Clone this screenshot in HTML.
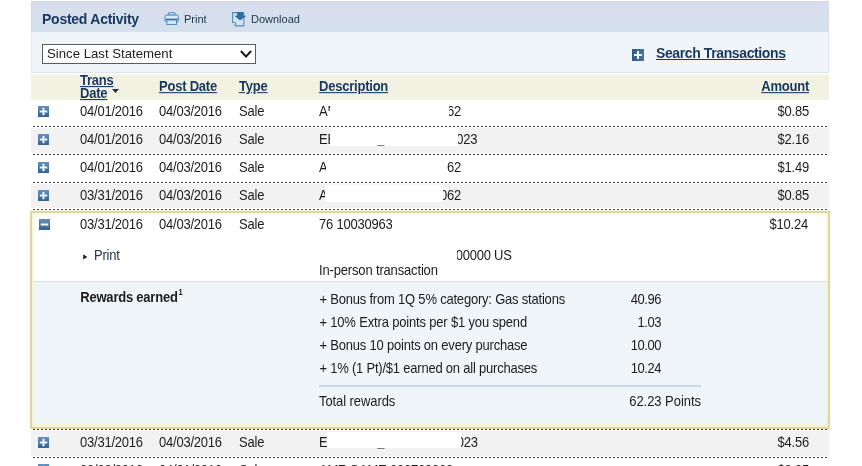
<!DOCTYPE html>
<html lang="en">
<head>
<meta charset="utf-8">
<title>Posted Activity</title>
<style>
html,body{margin:0;padding:0;background:#fff;}
body{width:862px;height:466px;overflow:hidden;position:relative;font-family:"Liberation Sans",Arial,sans-serif;font-size:13px;color:#1c1c1c;letter-spacing:-0.22px;}
.abs{position:absolute;white-space:nowrap;}
#panel{position:absolute;left:31px;top:1px;width:798px;height:465px;will-change:transform;}
#hdr{position:absolute;left:0;top:0;width:798px;height:31px;background:linear-gradient(#d9deee,#d4e0ec);box-sizing:border-box;border-top:1px solid #d0d8e4;border-left:1px solid #d0d8e4;}
#flt{position:absolute;left:0;top:31px;width:798px;height:41px;background:#f0f5fa;box-sizing:border-box;border-left:1px solid #dde4ee;border-right:1px solid #dde4ee;border-bottom:1px solid #dfe5ee;}
#thead{position:absolute;left:0;top:73px;width:798px;height:26px;background:linear-gradient(#f8f8ef 0,#f8f8ef 1px,#f2f2e2 1px);}
.navy{color:#17375e;}
.b{font-weight:bold;}
.u{text-decoration:underline;}
.row{position:absolute;left:0;width:798px;height:27px;}
.row.g{background:linear-gradient(#f2f2f2,#f2f2f2) no-repeat 0 1px / 100% 25px;}
.dot{position:absolute;left:0;width:798px;height:1px;background:repeating-linear-gradient(90deg,transparent 0,transparent 2px,#3a3a3a 2px,#3a3a3a 4px);}
.row span,.row i{position:absolute;white-space:nowrap;top:5px;line-height:15px;font-style:normal;}
.c1{left:49px;}
.c2{left:128px;}
.c3{left:208px;}
.c4{left:288px;}
.c5{right:20px;}
.ico{position:absolute;left:7px;top:7px;width:11px;height:11px;}
.mask{position:absolute;background:#fff;}
#exp{position:absolute;left:-1px;top:210px;width:800px;height:218px;box-sizing:border-box;border:2px solid #dcd7a6;background:#fff;box-shadow:0 0 2px 0 #f3f0cf;}
#glow{position:absolute;left:0;top:0;width:796px;height:214px;box-shadow:inset 0 0 3px 1px #f3f0c6;pointer-events:none;}
#rew{position:absolute;left:0px;top:68px;width:796px;height:142px;background:#f0f5fa;border-top:1px solid #d9dde2;border-bottom:3px solid #fbf9e3;}
#rew span{position:absolute;white-space:nowrap;line-height:15px;}
.row span,.row i,#exp>span.abs,#rew>span{transform:scaleY(1.09);transform-origin:0 12px;}
#thead span{transform:scaleY(1.06);transform-origin:0 11px;}
</style>
</head>
<body>
<svg width="0" height="0" style="position:absolute"><defs><linearGradient id="gi" x1="0" y1="0" x2="0" y2="1"><stop offset="0" stop-color="#6690bd"/><stop offset="1" stop-color="#36618f"/></linearGradient></defs></svg>
<div id="panel">
  <div id="hdr">
    <span class="abs b navy" style="left:10px;top:9px;font-size:14px;line-height:16px;letter-spacing:-0.25px;">Posted Activity</span>
    <svg class="abs" style="left:132px;top:10px" width="16" height="14" viewBox="0 0 16 14">
      <path d="M4 3.2 L4.7 0.7 H10.7 L11.4 3.2 Z" fill="#cfe4f5" stroke="#4f8abb" stroke-width="1"/>
      <rect x="1" y="3.1" width="13.4" height="7" rx="1.6" fill="#dbe9f5" stroke="#4f8abb" stroke-width="1"/>
      <rect x="1.6" y="6.7" width="12.2" height="1.4" fill="#2a5a8c"/>
      <rect x="2.9" y="8" width="9.6" height="4.5" fill="#d2e6f6" stroke="#4f8abb" stroke-width="1"/>
    </svg>
    <span class="abs navy" style="left:152px;top:11px;font-size:11px;line-height:13px;letter-spacing:0;color:#22354f;">Print</span>
    <svg class="abs" style="left:200px;top:10px" width="16" height="15" viewBox="0 0 16 15">
      <path d="M0.6 0.6 H11.8 V13.9 H3.6 L0.6 10.4 Z" fill="#d0e5f6" stroke="#4f8abb" stroke-width="1.1"/>
      <path d="M0.6 10.4 H3.6 V13.9" fill="#f4f9fd" stroke="#4f8abb" stroke-width="1"/>
      <path d="M5 0 H11.2 V3.7 H14.6 L8 8.4 L2.3 3.7 H5 Z" fill="#2f6fa6"/>
    </svg>
    <span class="abs navy" style="left:219px;top:11px;font-size:11px;line-height:13px;letter-spacing:0;color:#22354f;">Download</span>
  </div>
  <div id="flt">
    <div class="abs" style="left:10px;top:12px;width:214px;height:20px;box-sizing:border-box;border:1px solid #5c5c5c;background:#fff;">
      <span class="abs" style="left:4px;top:1px;font-size:13.2px;line-height:16px;letter-spacing:0;color:#222;">Since Last Statement</span>
      <svg class="abs" style="left:197.4px;top:4.5px" width="12" height="9" viewBox="0 0 12 9"><path d="M0.9 1 L6 6.6 L11.1 1" fill="none" stroke="#151515" stroke-width="2"/></svg>
    </div>
    <svg class="abs" style="left:600px;top:17px" width="12" height="12" viewBox="0 0 12 12">
      <defs><linearGradient id="gs" x1="0" y1="0" x2="1" y2="0"><stop offset="0" stop-color="#34588a"/><stop offset="1" stop-color="#4d7199"/></linearGradient></defs>
      <rect width="12" height="12" fill="url(#gs)"/>
      <path d="M6 2 V10 M2 6 H10" stroke="#ecffff" stroke-width="2"/>
    </svg>
    <span class="abs b navy u" style="left:624px;top:13px;font-size:14px;line-height:16px;letter-spacing:-0.39px;">Search Transactions</span>
  </div>
  <div id="thead">
    <span class="abs b navy u" style="left:49px;top:0px;line-height:13px;">Trans</span>
    <span class="abs b navy u" style="left:49px;top:12.6px;line-height:13px;">Date</span>
    <svg class="abs" style="left:81px;top:15px" width="7" height="4" viewBox="0 0 7 4"><path d="M0 0 H7 L3.5 4 Z" fill="#1f2f4a"/></svg>
    <span class="abs b navy u" style="left:128px;top:5px;line-height:15px;">Post Date</span>
    <span class="abs b navy u" style="left:208px;top:5px;line-height:15px;">Type</span>
    <span class="abs b navy u" style="left:288px;top:5px;line-height:15px;">Description</span>
    <span class="abs b navy u" style="right:20px;top:5px;line-height:15px;">Amount</span>
  </div>
  <div class="row" style="top:98px;"><svg class="ico" viewBox="0 0 11 11"><rect width="11" height="11" fill="url(#gi)"/><path d="M5.5 1.5 V9.5 M1.5 5.5 H9.5" stroke="#a9cdee" stroke-width="3.2" opacity="0.4"/><path d="M5.5 1.9 V9.1 M1.9 5.5 H9.1" stroke="#fff" stroke-width="1.6"/></svg><span class="c1">04/01/2016</span><span class="c2">04/03/2016</span><span class="c3">Sale</span><span class="c4">AM</span><span style="right:368px;">62</span><div class="mask" style="left:298.9px;top:1px;width:119.1px;height:26px;"></div><div class="mask" style="left:296.7px;top:12.3px;width:2.8px;height:14.7px;"></div><span class="c5">$0.85</span></div>
  <div class="dot" style="top:125px;"></div>
  <div class="row g" style="top:126px;"><svg class="ico" viewBox="0 0 11 11"><rect width="11" height="11" fill="url(#gi)"/><path d="M5.5 1.5 V9.5 M1.5 5.5 H9.5" stroke="#a9cdee" stroke-width="3.2" opacity="0.4"/><path d="M5.5 1.9 V9.1 M1.9 5.5 H9.1" stroke="#fff" stroke-width="1.6"/></svg><span class="c1">04/01/2016</span><span class="c2">04/03/2016</span><span class="c3">Sale</span><span class="c4">EB</span><span style="right:351.7px;">023</span><div class="mask" style="left:298.7px;top:1px;width:128px;height:18px;"></div><i style="left:346.2px;font-weight:bold;letter-spacing:-0.8px;">_</i><span class="c5">$2.16</span></div>
  <div class="dot" style="top:153px;"></div>
  <div class="row" style="top:154px;"><svg class="ico" viewBox="0 0 11 11"><rect width="11" height="11" fill="url(#gi)"/><path d="M5.5 1.5 V9.5 M1.5 5.5 H9.5" stroke="#a9cdee" stroke-width="3.2" opacity="0.4"/><path d="M5.5 1.9 V9.1 M1.9 5.5 H9.1" stroke="#fff" stroke-width="1.6"/></svg><span class="c1">04/01/2016</span><span class="c2">04/03/2016</span><span class="c3">Sale</span><span class="c4">AM</span><span style="right:368px;">62</span><div class="mask" style="left:295.1px;top:1px;width:119.9px;height:26px;"></div><span class="c5">$1.49</span></div>
  <div class="dot" style="top:181px;"></div>
  <div class="row g" style="top:182px;background-size:100% 24px;"><svg class="ico" viewBox="0 0 11 11"><rect width="11" height="11" fill="url(#gi)"/><path d="M5.5 1.5 V9.5 M1.5 5.5 H9.5" stroke="#a9cdee" stroke-width="3.2" opacity="0.4"/><path d="M5.5 1.9 V9.1 M1.9 5.5 H9.1" stroke="#fff" stroke-width="1.6"/></svg><span class="c1">03/31/2016</span><span class="c2">04/03/2016</span><span class="c3">Sale</span><span class="c4">AM</span><span style="right:368px;">062</span><div class="mask" style="left:293.8px;top:1.5px;width:118.1px;height:17.5px;"></div><span class="c5">$0.85</span></div>
  <div class="dot" style="top:208px;"></div>
  <div id="exp">
    <svg class="ico" style="left:7px;top:6px" viewBox="0 0 11 11"><rect width="11" height="11" fill="url(#gi)"/><path d="M1.5 5.5 H9.5" stroke="#a9cdee" stroke-width="3.2" opacity="0.4"/><path d="M1.9 5.5 H9.1" stroke="#fff" stroke-width="1.6"/></svg>
    <span class="abs" style="left:48px;top:4px;line-height:15px;">03/31/2016</span>
    <span class="abs" style="left:127px;top:4px;line-height:15px;">04/03/2016</span>
    <span class="abs" style="left:207px;top:4px;line-height:15px;">Sale</span>
    <span class="abs" style="left:287px;top:4px;line-height:15px;">76 10030963</span>
    <span class="abs" style="right:20px;top:4px;line-height:15px;">$10.24</span>
    <svg class="abs" style="left:51px;top:41px" width="5" height="6" viewBox="0 0 5 6"><path d="M0.2 0.3 L4.4 2.9 L0.2 5.5 Z" fill="#1a2230"/></svg>
    <span class="abs" style="left:62px;top:35px;line-height:15px;color:#253447;">Print</span>
    <span class="abs" style="right:316.3px;top:35px;line-height:15px;">00000 US</span>
    <div class="mask" style="left:380px;top:30px;width:45.1px;height:20px;"></div>
    <span class="abs" style="left:287px;top:50px;line-height:15px;letter-spacing:-0.16px;">In-person transaction</span>
    <div id="rew">
      <span class="b" style="left:48.3px;top:8px;">Rewards earned<sup style="font-size:7.5px;line-height:0;position:relative;top:-0.5px;margin-left:0.8px;vertical-align:super;">1</sup></span>
      <span style="left:287.4px;top:10px;letter-spacing:-0.205px;">+ Bonus from 1Q 5% category: Gas stations</span>
      <span style="right:167px;top:10px;letter-spacing:-0.44px;">40.96</span>
      <span style="left:287.4px;top:33px;letter-spacing:-0.17px;">+ 10% Extra points per $1 you spend</span>
      <span style="right:167px;top:33px;letter-spacing:-0.44px;">1.03</span>
      <span style="left:287.4px;top:56px;letter-spacing:-0.2px;">+ Bonus 10 points on every purchase</span>
      <span style="right:167px;top:56px;letter-spacing:-0.44px;">10.00</span>
      <span style="left:287.4px;top:79px;letter-spacing:-0.215px;">+ 1% (1 Pt)/$1 earned on all purchases</span>
      <span style="right:167px;top:79px;letter-spacing:-0.44px;">10.24</span>
      <div class="abs" style="left:287px;top:103px;width:382px;height:2px;background:#c9d8e7;"></div>
      <span style="left:287px;top:112px;letter-spacing:-0.08px;">Total rewards</span>
      <span style="right:127px;top:112px;letter-spacing:-0.04px;">62.23 Points</span>
    </div>
    <div id="glow"></div>
  </div>
  <div class="dot" style="top:428px;"></div>
  <div class="row g" style="top:429px;"><svg class="ico" viewBox="0 0 11 11"><rect width="11" height="11" fill="url(#gi)"/><path d="M5.5 1.5 V9.5 M1.5 5.5 H9.5" stroke="#a9cdee" stroke-width="3.2" opacity="0.4"/><path d="M5.5 1.9 V9.1 M1.9 5.5 H9.1" stroke="#fff" stroke-width="1.6"/></svg><span class="c1">03/31/2016</span><span class="c2">04/03/2016</span><span class="c3">Sale</span><span class="c4">EB</span><span style="right:351.3px;">023</span><div class="mask" style="left:296.1px;top:2.3px;width:133.6px;height:15.9px;"></div><i style="left:346.2px;font-weight:bold;letter-spacing:-0.8px;">_</i><span class="c5">$4.56</span></div>
  <div class="dot" style="top:456px;"></div>
  <div class="row" style="top:457px;"><svg class="ico" style="top:6px" viewBox="0 0 11 11"><rect width="11" height="11" fill="url(#gi)"/><path d="M5.5 1.5 V9.5 M1.5 5.5 H9.5" stroke="#a9cdee" stroke-width="3.2" opacity="0.4"/><path d="M5.5 1.9 V9.1 M1.9 5.5 H9.1" stroke="#fff" stroke-width="1.6"/></svg><span class="c1">03/30/2016</span><span class="c2">04/01/2016</span><span class="c3">Sale</span><span class="c4">AMZ GAME 000760368</span><span class="c5">$0.85</span></div>
</div>
</body>
</html>
